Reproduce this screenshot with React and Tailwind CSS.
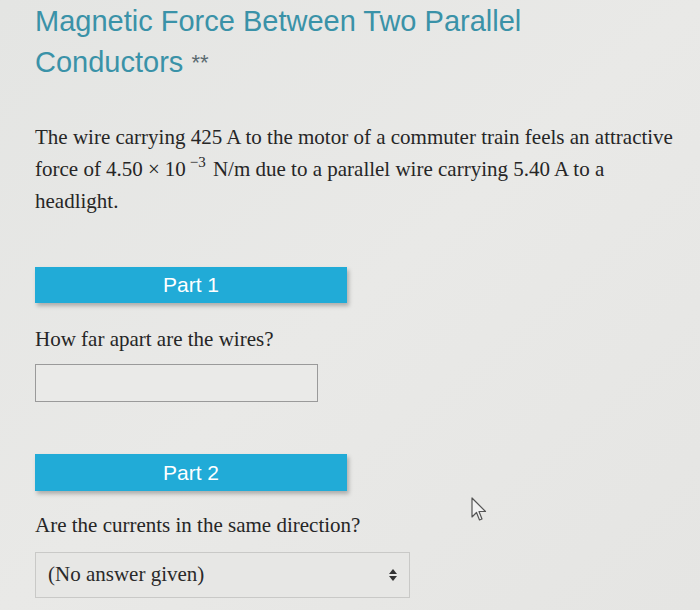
export default function App() {
  const serif = { fontFamily: "'Liberation Serif', 'Times New Roman', serif" };
  const sans = { fontFamily: "'Liberation Sans', Arial, sans-serif" };
  return (
    <div className="relative w-[700px] h-[610px] overflow-hidden bg-gradient-to-br from-[#e4e5e3] via-[#e9e9e7] to-[#e5e5e3]">
      <div className="pl-[35px] pt-[1px]">
        <h1 className="text-[29px] leading-[41px] text-[#3a92a8] w-[560px]" style={sans}>
          Magnetic Force Between Two Parallel Conductors{' '}
          <span className="text-[#5a6a70] text-[22px] align-top">**</span>
        </h1>

        <p className="mt-[38px] w-[645px] text-[21px] leading-[32px] text-[#262626]" style={serif}>
          The wire carrying 425 A to the motor of a commuter train feels an attractive force of 4.50
          <span className="mx-[5px]">×</span>10
          <sup className="text-[15px] leading-none relative -top-[9px] ml-[4px] mr-[2px]">−3</sup> N/m due to a parallel wire carrying 5.40 A to a
          headlight.
        </p>

        <div
          className="mt-[50px] w-[312px] h-[36px] bg-[#21abd7] shadow-[2px_3px_4px_rgba(0,0,0,0.25)] flex items-center justify-center text-white text-[21px]"
          style={sans}
        >
          Part 1
        </div>

        <p className="mt-[20px] text-[21px] leading-[32px] text-[#262626]" style={serif}>
          How far apart are the wires?
        </p>

        <div className="mt-[9px] w-[283px] h-[38px] border border-[#9a9a9a] bg-[#eaeae8]" />

        <div
          className="mt-[52px] w-[312px] h-[37px] bg-[#21abd7] shadow-[2px_3px_4px_rgba(0,0,0,0.25)] flex items-center justify-center text-white text-[21px]"
          style={sans}
        >
          Part 2
        </div>

        <p className="mt-[18px] text-[21px] leading-[32px] text-[#262626]" style={serif}>
          Are the currents in the same direction?
        </p>

        <div className="mt-[11px] w-[375px] h-[46px] border border-[#c9c9c7] bg-[#e7e7e5] flex items-center justify-between pl-[12px] pr-[12px]">
          <span className="text-[21px] text-[#2a2a2a]" style={serif}>
            (No answer given)
          </span>
          <svg width="8" height="12" viewBox="0 0 8 12">
            <path d="M4 0 L8 5 H0 Z" fill="#333" />
            <path d="M4 12 L8 7 H0 Z" fill="#333" />
          </svg>
        </div>
      </div>

      <svg className="absolute left-[471px] top-[497px]" width="16" height="26" viewBox="0 0 16 26">
        <path d="M1 1 L1 20 L5.5 15.5 L8.5 23 L11 22 L8 14.5 L14.5 14.5 Z" fill="#f2f2f2" stroke="#555" strokeWidth="1.2" strokeLinejoin="round" />
      </svg>
    </div>
  );
}
